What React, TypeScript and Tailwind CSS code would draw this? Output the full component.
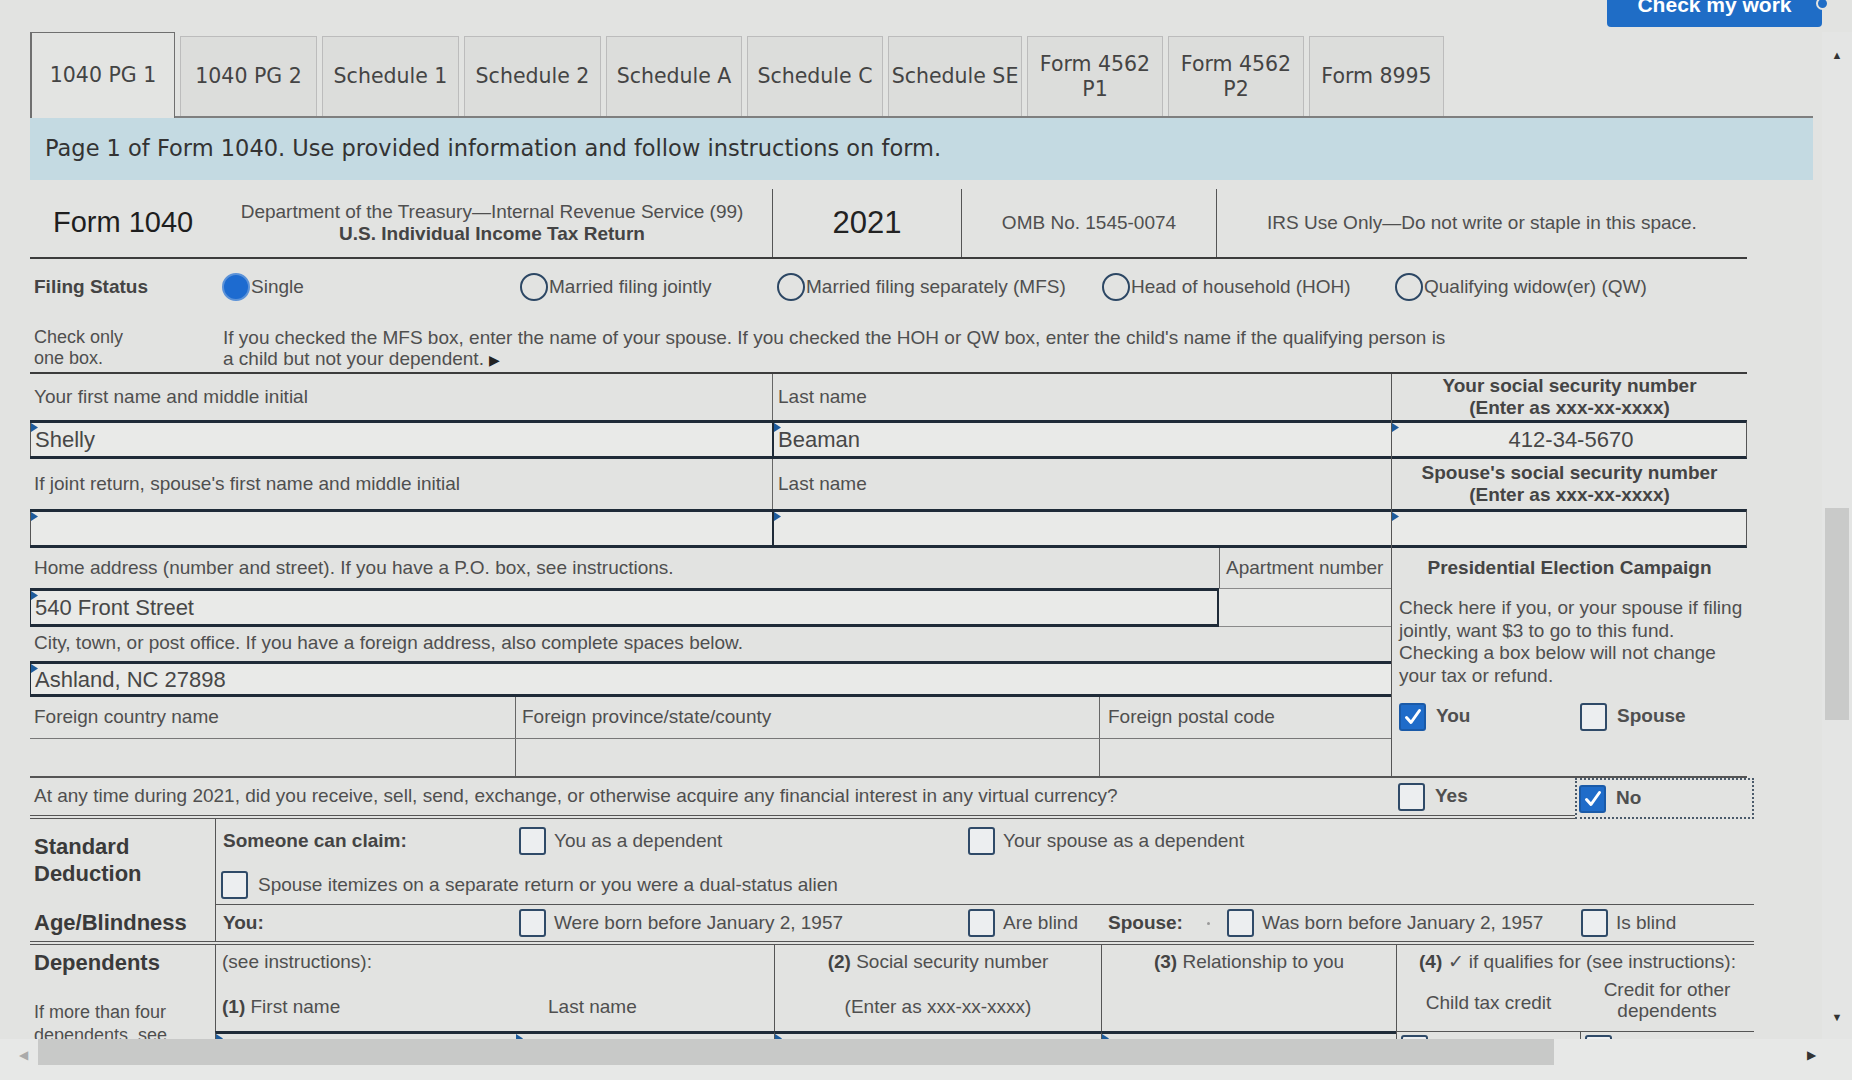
import React from 'react';

const tabs: string[][] = [
  ['1040 PG 1'],
  ['1040 PG 2'],
  ['Schedule 1'],
  ['Schedule 2'],
  ['Schedule A'],
  ['Schedule C'],
  ['Schedule SE'],
  ['Form 4562', 'P1'],
  ['Form 4562', 'P2'],
  ['Form 8995'],
];
const tabWidths = ['w-[145px]', 'w-[137px]', 'w-[137px]', 'w-[137px]', 'w-[136px]', 'w-[136px]', 'w-[134px]', 'w-[136px]', 'w-[136px]', 'w-[135px]'];

const Marker = () => (
  <svg width="7" height="10" viewBox="0 0 7 10" className="absolute left-0 top-0">
    <path d="M0 0 L7 4.5 L0 9 Z" fill="#1d5b9c" />
  </svg>
);

const Box = ({ checked }: { checked?: boolean }) =>
  checked ? (
    <span className="inline-flex w-[27px] h-[28px] shrink-0 items-center justify-center rounded-[3px] bg-[#1f6cc9] border-2 border-[#1a5aa8]">
      <svg viewBox="0 0 20 20" className="w-[20px] h-[20px]">
        <path d="M3.5 10.5 L8 15.5 L16.5 3.5" fill="none" stroke="white" strokeWidth="3" strokeLinecap="round" strokeLinejoin="round" />
      </svg>
    </span>
  ) : (
    <span className="inline-block w-[27px] h-[28px] shrink-0 rounded-[3px] border-[2.5px] border-[#2f4a68] bg-[#eceef0]" />
  );

const Radio = ({ checked }: { checked?: boolean }) =>
  checked ? (
    <span className="inline-block w-[28px] h-[28px] shrink-0 rounded-full bg-[#1d6bd0] border-2 border-[#5b92d8]" />
  ) : (
    <span className="inline-block w-[28px] h-[28px] shrink-0 rounded-full border-[2.5px] border-[#2c4764]" />
  );

const Field = ({ value, className = '' }: { value?: string; className?: string }) => (
  <div className={`relative flex items-center pl-[4px] text-[22px] text-[#474747] bg-[#e9eae8] ${className}`}>
    <Marker />
    {value}
  </div>
);

export default function App() {
  return (
    <div className="w-[1852px] h-[1080px] overflow-hidden bg-[#e2e3e1] flex flex-col font-['Liberation_Sans',Arial,sans-serif] text-[19px] text-[#4f4f4f]">
      <div className="h-[32px] shrink-0 flex justify-end pr-[30px]">
        <div className="relative -mt-[17px] h-[44px] w-[215px] rounded-[4px] bg-[#1f6dc6] flex items-center justify-center text-white font-bold text-[21px]">
          Check my work
          <span className="absolute -right-[7px] top-[14px] w-[13px] h-[13px] rounded-full bg-[#1f6dc6] border-2 border-[#e2e3e1]" />
        </div>
      </div>

      <div className="flex-1 flex min-h-0">
        <div className="flex-1 min-w-0 overflow-hidden pl-[30px]">
          {/* tabs */}
          <div className="w-[1783px] h-[86px] flex items-end gap-[5px] border-b-2 border-[#7f7f7f] font-['DejaVu_Sans',sans-serif] text-[20.5px] text-[#444]">
            {tabs.map((t, i) =>
              i === 0 ? (
                <div key={i} className={`${tabWidths[i]} h-[86px] -mb-[2px] relative z-10 flex items-center justify-center bg-[#e3e4e2] border-l-2 border-t border-r border-[#6f6f6f]`}>
                  {t[0]}
                </div>
              ) : (
                <div key={i} className={`${tabWidths[i]} h-[80px] flex flex-col items-center justify-center leading-[25px] bg-[#dcdddb] border border-b-0 border-[#bcbcbc]`}>
                  {t.map((l) => (
                    <span key={l}>{l}</span>
                  ))}
                </div>
              )
            )}
          </div>

          {/* info bar */}
          <div className="w-[1783px] h-[62px] bg-[#c4dae2] flex items-center pl-[15px] font-['DejaVu_Sans',sans-serif] text-[22.5px] text-[#333]">
            Page 1 of Form 1040. Use provided information and follow instructions on form.
          </div>

          <div className="w-[1724px] mt-[9px]">
            {/* header */}
            <div className="w-[1717px] h-[70px] border-b-2 border-[#3c3c3c] grid grid-cols-[742px_189px_255px_1fr]">
              <div className="flex items-center">
                <div className="w-[182px] pl-[23px] text-[29px] text-[#1e1e1e]">Form 1040</div>
                <div className="flex-1 text-center leading-[22px]">
                  <div>Department of the Treasury—Internal Revenue Service (99)</div>
                  <div className="font-bold text-[#444]">U.S. Individual Income Tax Return</div>
                </div>
              </div>
              <div className="border-l border-[#555] flex items-center justify-center text-[31px] text-[#222]">2021</div>
              <div className="border-l border-[#555] flex items-center justify-center">OMB No. 1545-0074</div>
              <div className="border-l border-[#555] flex items-center justify-center">IRS Use Only—Do not write or staple in this space.</div>
            </div>

            {/* filing status */}
            <div className="w-[1717px] h-[115px] border-b-2 border-[#3c3c3c] pt-[14px]">
              <div className="flex items-center h-[28px]">
                <div className="w-[192px] pl-[4px] font-bold text-[#444]">Filing Status</div>
                {[
                  ['Single', 'w-[298px]', true],
                  ['Married filing jointly', 'w-[257px]', false],
                  ['Married filing separately (MFS)', 'w-[325px]', false],
                  ['Head of household (HOH)', 'w-[293px]', false],
                  ['Qualifying widow(er) (QW)', '', false],
                ].map(([label, w, c]) => (
                  <div key={label as string} className={`${w} flex items-center gap-[1px]`}>
                    <Radio checked={c as boolean} />
                    <span>{label as string}</span>
                  </div>
                ))}
              </div>
              <div className="flex mt-[26px] leading-[21px]">
                <div className="w-[193px] pl-[4px] text-[18px]">
                  Check only
                  <br />
                  one box.
                </div>
                <div>
                  If you checked the MFS box, enter the name of your spouse. If you checked the HOH or QW box, enter the child's name if the qualifying person is
                  <br />a child but not your dependent. <span className="text-[#222] text-[14px]">▶</span>
                </div>
              </div>
            </div>

            {/* name / address block */}
            <div className="w-[1717px] flex">
              <div className="w-[1361px]">
                <div className="h-[46px] grid grid-cols-[742px_1fr]">
                  <div className="flex items-center pl-[4px]">Your first name and middle initial</div>
                  <div className="flex items-center pl-[5px] border-l border-[#666]">Last name</div>
                </div>
                <div className="h-[39px] grid grid-cols-[742px_1fr] border-y-[3px] border-[#1f2b38]">
                  <Field value="Shelly" className="border-l border-[#555]" />
                  <Field value="Beaman" className="border-l-2 border-[#1f2b38]" />
                </div>
                <div className="h-[50px] grid grid-cols-[742px_1fr]">
                  <div className="flex items-center pl-[4px]">If joint return, spouse's first name and middle initial</div>
                  <div className="flex items-center pl-[5px] border-l border-[#666]">Last name</div>
                </div>
                <div className="h-[39px] grid grid-cols-[742px_1fr] border-y-[3px] border-[#1f2b38]">
                  <Field className="border-l border-[#555]" />
                  <Field className="border-l-2 border-[#1f2b38]" />
                </div>
                <div className="h-[40px] grid grid-cols-[1189px_1fr]">
                  <div className="flex items-center pl-[4px]">Home address (number and street). If you have a P.O. box, see instructions.</div>
                  <div className="flex items-center pl-[6px] border-l border-[#666]">Apartment number</div>
                </div>
                <div className="h-[37px] grid grid-cols-[1189px_1fr]">
                  <Field value="540 Front Street" className="border-y-[3px] border-l border-r-2 border-[#1f2b38]" />
                  <div className="border-y border-[#8a8a8a] bg-[#e6e7e5]" />
                </div>
                <div className="h-[36px] flex items-center pl-[4px]">City, town, or post office. If you have a foreign address, also complete spaces below.</div>
                <Field value="Ashland, NC 27898" className="h-[36px] border-y-[3px] border-l border-[#1f2b38]" />
                <div className="h-[41px] grid grid-cols-[485px_584px_1fr]">
                  <div className="flex items-center pl-[4px]">Foreign country name</div>
                  <div className="flex items-center pl-[6px] border-l border-[#666]">Foreign province/state/county</div>
                  <div className="flex items-center pl-[8px] border-l border-[#666]">Foreign postal code</div>
                </div>
                <div className="h-[40px] grid grid-cols-[485px_584px_1fr] border-t border-[#777] border-b-2 border-b-[#555]">
                  <div />
                  <div className="border-l border-[#666]" />
                  <div className="border-l border-[#666]" />
                </div>
              </div>

              <div className="flex-1 border-l border-[#555] flex flex-col">
                <div className="h-[46px] flex flex-col items-center justify-center leading-[22px] font-bold text-[#444]">
                  <span>Your social security number</span>
                  <span>(Enter as xxx-xx-xxxx)</span>
                </div>
                <Field value="412-34-5670" className="h-[39px] justify-center border-y-[3px] border-[#1f2b38] border-r border-r-[#555]" />
                <div className="h-[50px] flex flex-col items-center justify-center leading-[22px] font-bold text-[#444]">
                  <span>Spouse's social security number</span>
                  <span>(Enter as xxx-xx-xxxx)</span>
                </div>
                <Field className="h-[39px] border-y-[3px] border-[#1f2b38] border-r border-r-[#555]" />
                <div className="flex-1 pt-[8px] border-b-2 border-[#555]">
                  <div className="text-center font-bold text-[#444] leading-[24px]">Presidential Election Campaign</div>
                  <div className="mt-[17px] pl-[7px] leading-[22.6px]">
                    Check here if you, or your spouse if filing
                    <br />
                    jointly, want $3 to go to this fund.
                    <br />
                    Checking a box below will not change
                    <br />
                    your tax or refund.
                  </div>
                  <div className="mt-[15px] flex items-center pl-[7px]">
                    <div className="w-[181px] flex items-center gap-[10px]">
                      <Box checked />
                      <span className="font-bold">You</span>
                    </div>
                    <div className="flex items-center gap-[10px]">
                      <Box />
                      <span className="font-bold">Spouse</span>
                    </div>
                  </div>
                </div>
              </div>
            </div>

            {/* virtual currency */}
            <div className="h-[41px] grid grid-cols-[1361px_184px_1fr]">
              <div className="flex items-center pl-[4px] border-b-4 border-double border-[#555]">
                At any time during 2021, did you receive, sell, send, exchange, or otherwise acquire any financial interest in any virtual currency?
              </div>
              <div className="flex items-center pl-[7px] gap-[10px] border-b-4 border-double border-[#555]">
                <Box />
                <span className="font-bold">Yes</span>
              </div>
              <div className="flex items-center pl-[2px] gap-[10px] border-2 border-dotted border-[#4a5a6a]">
                <Box checked />
                <span className="font-bold">No</span>
              </div>
            </div>

            {/* standard deduction */}
            <div className="h-[85px] grid grid-cols-[185px_1fr]">
              <div className="pl-[4px] pt-[14px] text-[22px] font-bold text-[#3a3a3a] leading-[27px]">
                Standard
                <br />
                Deduction
              </div>
              <div className="border-l border-[#555] pl-[7px]">
                <div className="mt-[8px] h-[28px] flex items-center">
                  <span className="w-[296px] font-bold text-[#444]">Someone can claim:</span>
                  <div className="w-[449px] flex items-center gap-[8px]">
                    <Box />
                    <span>You as a dependent</span>
                  </div>
                  <div className="flex items-center gap-[8px]">
                    <Box />
                    <span>Your spouse as a dependent</span>
                  </div>
                </div>
                <div className="mt-[16px] h-[28px] flex items-center gap-[10px] -ml-[2px]">
                  <Box />
                  <span>Spouse itemizes on a separate return or you were a dual-status alien</span>
                </div>
              </div>
            </div>

            {/* age / blindness */}
            <div className="h-[41px] grid grid-cols-[185px_1fr] border-b-4 border-double border-[#555]">
              <div className="pl-[4px] flex items-center text-[22px] font-bold text-[#3a3a3a]">Age/Blindness</div>
              <div className="border-l border-t border-[#555] pl-[7px] flex items-center">
                <span className="w-[296px] font-bold text-[#444]">You:</span>
                <div className="w-[449px] flex items-center gap-[8px]">
                  <Box />
                  <span>Were born before January 2, 1957</span>
                </div>
                <div className="w-[140px] flex items-center gap-[8px]">
                  <Box />
                  <span>Are blind</span>
                </div>
                <div className="w-[119px] flex items-center">
                  <span className="font-bold text-[#444]">Spouse:</span>
                  <span className="ml-[24px] w-[3px] h-[3px] rounded-full bg-[#999]" />
                </div>
                <div className="w-[354px] flex items-center gap-[8px]">
                  <Box />
                  <span>Was born before January 2, 1957</span>
                </div>
                <div className="flex items-center gap-[8px]">
                  <Box />
                  <span>Is blind</span>
                </div>
              </div>
            </div>

            {/* dependents */}
            <div className="grid grid-cols-[185px_559px_327px_295px_1fr] grid-rows-[86px_40px]">
              <div className="row-span-2 pl-[4px] pt-[4px]">
                <div className="text-[22px] font-bold text-[#3a3a3a] leading-[28px]">Dependents</div>
                <div className="mt-[24px] text-[18px] leading-[23px]">
                  If more than four
                  <br />
                  dependents, see
                </div>
              </div>
              <div className="border-l border-[#555] pl-[6px] pt-[3px]">
                <div className="h-[24px]">(see instructions):</div>
                <div className="mt-[21px] flex">
                  <span className="w-[326px]">
                    <b className="text-[#444]">(1)</b> First name
                  </span>
                  <span>Last name</span>
                </div>
              </div>
              <div className="border-l border-[#555] pt-[3px] text-center">
                <div className="h-[24px]">
                  <b className="text-[#444]">(2)</b> Social security number
                </div>
                <div className="mt-[21px]">(Enter as xxx-xx-xxxx)</div>
              </div>
              <div className="border-l border-[#555] pt-[3px] text-center">
                <b className="text-[#444]">(3)</b> Relationship to you
              </div>
              <div className="border-l border-[#555] pt-[3px]">
                <div className="pl-[22px] h-[24px]">
                  <b className="text-[#444]">(4)</b> ✓ if qualifies for (see instructions):
                </div>
                <div className="grid grid-cols-[183px_1fr] leading-[21px] mt-[7px]">
                  <div className="flex items-center justify-center h-[46px]">Child tax credit</div>
                  <div className="text-center">
                    Credit for other
                    <br />
                    dependents
                  </div>
                </div>
              </div>
              <div className="border-l border-[#555] border-t-[3px] border-t-[#1f2b38] grid grid-cols-[300px_1fr]">
                <div className="relative">
                  <Marker />
                </div>
                <div className="relative">
                  <Marker />
                </div>
              </div>
              <div className="relative border-l border-[#555] border-t-[3px] border-t-[#1f2b38]">
                <Marker />
              </div>
              <div className="relative border-l border-[#555] border-t-[3px] border-t-[#1f2b38]">
                <Marker />
              </div>
              <div className="border-l border-[#555] border-t border-[#555] grid grid-cols-[183px_1fr]">
                <div className="pl-[4px] pt-[3px]">
                  <Box />
                </div>
                <div className="border-l border-[#555] pl-[4px] pt-[3px]">
                  <Box />
                </div>
              </div>
            </div>
          </div>
        </div>

        {/* vertical scrollbar */}
        <div className="w-[30px] shrink-0 bg-[#e4e5e4] flex flex-col items-center">
          <span className="mt-[17px] text-[11px] leading-[12px] text-[#333]">▲</span>
          <div className="mt-[447px] w-[24px] h-[212px] bg-[#c9cac9]" />
          <div className="flex-1" />
          <span className="mb-[16px] text-[11px] leading-[12px] text-[#333]">▼</span>
        </div>
      </div>

      {/* horizontal scrollbar */}
      <div className="h-[41px] shrink-0 bg-[#e7e8e7] flex items-start">
        <span className="ml-[19px] mt-[7px] text-[12px] text-[#aaa]">◀</span>
        <div className="ml-[10px] w-[1516px] h-[26px] bg-[#c8c9c8]" />
        <div className="flex-1" />
        <span className="mr-[36px] mt-[7px] text-[12px] text-[#333]">▶</span>
      </div>
    </div>
  );
}
